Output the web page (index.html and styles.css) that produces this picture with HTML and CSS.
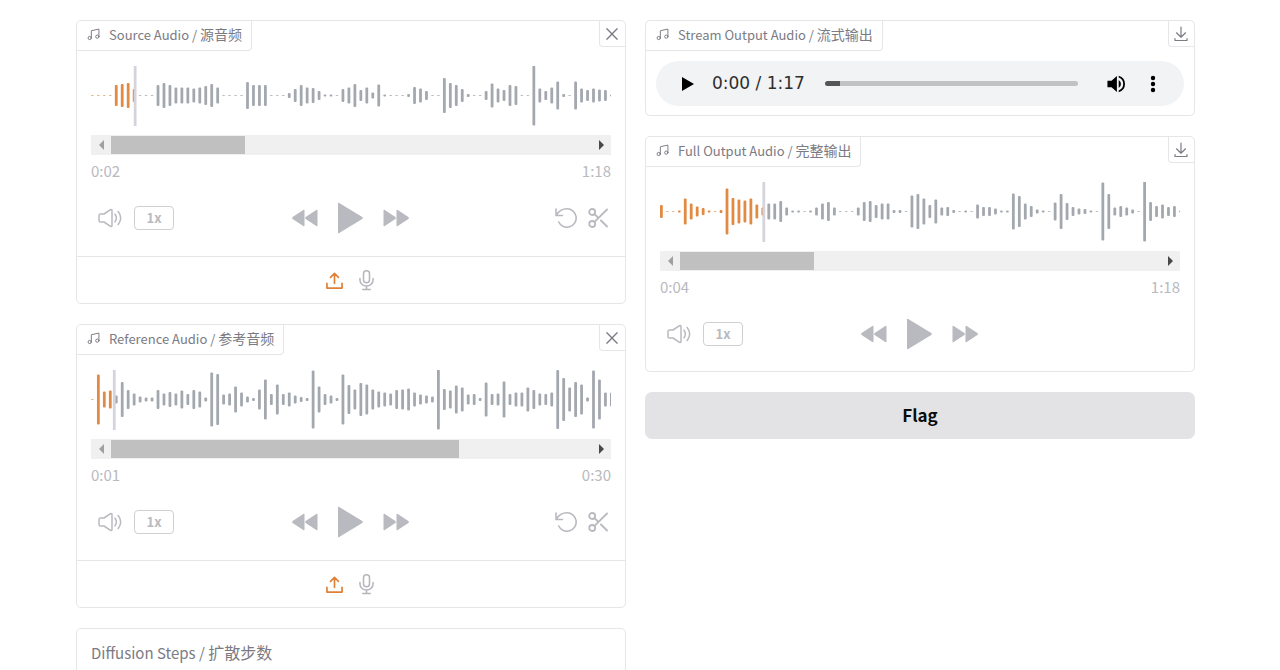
FILE: index.html
```html
<!DOCTYPE html>
<html lang="en">
	<head>
		<meta charset="UTF-8" />
		<meta name="viewport" content="width=device-width, initial-scale=1.0" />
		<title>Voice Conversion</title>
		<link rel="stylesheet" href="styles.css">
	</head>
	<body>
		<!-- Shared icons -->
		<svg class="sprite" aria-hidden="true">
			<symbol id="icon-music" viewBox="0 0 24 24">
				<path d="M8 18.500V5L22 2v14" />
				<circle cx="5" cy="18.500" r="3" />
				<circle cx="19" cy="16" r="3" />
			</symbol>
			<symbol id="icon-close" viewBox="0 0 14 14">
				<path d="M1 1l12 12M13 1L1 13" />
			</symbol>
			<symbol id="icon-download" viewBox="0 0 14 16">
				<path d="M7 1v10M2.500 6.800L7 11.200l4.500-4.400M1 12.500v2h12v-2" />
			</symbol>
			<symbol id="icon-volume" viewBox="0 0 24 20">
				<path d="M1 7.500Q1 6 2.500 6H6l6.500-4.300Q14 1 14 2.500v15q0 1.500-1.500.8L6 14H2.500Q1 14 1 12.500z" />
				<path d="M17 6.200q2.800 3.800 0 7.600M20.200 3.500q5 6.500 0 13" />
			</symbol>
			<symbol id="icon-rewind" viewBox="0 0 26 18">
				<path d="M12.500 1.500v15q0 1.300-1.200.6L.6 10q-1-1 0-2L11.300.9q1.200-.7 1.200.6zM25.500 1.500v15q0 1.300-1.200.6L13.600 10q-1-1 0-2L24.300.9q1.200-.7 1.200.6z" />
			</symbol>
			<symbol id="icon-forward" viewBox="0 0 26 18">
				<path d="M.5 1.500v15q0 1.300 1.200.6L12.400 10q1-1 0-2L1.700.9Q.5.2.5 1.500zM13.500 1.500v15q0 1.300 1.200.6L25.400 10q1-1 0-2L14.700.9q-1.200-.7-1.200.6z" />
			</symbol>
			<symbol id="icon-play" viewBox="0 0 25 32">
				<path d="M0 1.500v29q0 1.300 1.200.5L24.300 16.900q1-.9 0-1.800L1.200 1Q0 .2 0 1.500z" />
			</symbol>
			<symbol id="icon-undo" viewBox="0 0 22 20">
				<path d="M1 1v6.500h6.500M1.500 7Q5 .8 12 .8a9.200 9.200 0 1 1-8.300 13.200" />
			</symbol>
			<symbol id="icon-trim" viewBox="0 0 20 20">
				<circle cx="4.200" cy="4" r="3" />
				<circle cx="4.200" cy="16" r="3" />
				<path d="M19 1.500L6.500 13.900M6.500 6.100L9.500 9M13 12.500l6 6" />
			</symbol>
			<symbol id="icon-upload" viewBox="0 0 18 18">
				<path d="M9 12V1.500M4.800 5.700L9 1.500l4.200 4.200M1 12v5h16v-5" />
			</symbol>
			<symbol id="icon-mic" viewBox="0 0 16 22">
				<rect x="4.800" y="1" width="6.400" height="13" rx="3.200" />
				<path d="M1 9.500v1.500a7 6.500 0 0 0 14 0V9.500M8 17.500V21M4 21h8" />
			</symbol>
			<symbol id="icon-speaker" viewBox="0 0 20 20">
				<path d="M.5 6.500V13.500H5L11 19V1L5 6.500zM13 5.500v9q2.500-1.500 2.500-4.500T13 5.500zM13 .8v2.100q5 2 5 7.100t-5 7.100v2.100q7-2.300 7-9.200T13 .8z" />
			</symbol>
		</svg>

		<main class="app">
			<div class="column">
				<section class="card">
					<header class="card-header">
						<h2 class="label"><svg class="icon label-icon"><use href="#icon-music" /></svg><span>Source Audio / <span lang="zh">源音频</span></span></h2>
						<button class="corner" aria-label="Clear"><svg class="icon icon-close"><use href="#icon-close" /></svg></button>
					</header>
					<div class="player">
						<svg class="wave" data-track="source"></svg>
						<div class="scroller">
							<button class="arrow arrow-left" aria-label="Scroll left"></button>
							<div class="rail"><div class="thumb" style="width: 28%"></div></div>
							<button class="arrow arrow-right" aria-label="Scroll right"></button>
						</div>
						<div class="times"><time>0:02</time><time>1:18</time></div>
						<div class="controls">
							<div class="group sound">
								<button aria-label="Volume"><svg class="icon icon-volume"><use href="#icon-volume" /></svg></button>
								<button class="speed">1x</button>
							</div>
							<div class="group playback">
								<button aria-label="Back"><svg class="solid icon-skip"><use href="#icon-rewind" /></svg></button>
								<button aria-label="Play"><svg class="solid icon-play"><use href="#icon-play" /></svg></button>
								<button aria-label="Forward"><svg class="solid icon-skip"><use href="#icon-forward" /></svg></button>
							</div>
							<div class="group edit">
								<button aria-label="Undo"><svg class="icon icon-undo"><use href="#icon-undo" /></svg></button>
								<button aria-label="Trim"><svg class="icon icon-trim"><use href="#icon-trim" /></svg></button>
							</div>
						</div>
					</div>
					<footer class="sources">
						<button class="active" aria-label="Upload file"><svg class="icon icon-upload"><use href="#icon-upload" /></svg></button>
						<button aria-label="Record audio"><svg class="icon icon-mic"><use href="#icon-mic" /></svg></button>
					</footer>
				</section>

				<section class="card">
					<header class="card-header">
						<h2 class="label"><svg class="icon label-icon"><use href="#icon-music" /></svg><span>Reference Audio / <span lang="zh">参考音频</span></span></h2>
						<button class="corner" aria-label="Clear"><svg class="icon icon-close"><use href="#icon-close" /></svg></button>
					</header>
					<div class="player">
						<svg class="wave" data-track="reference"></svg>
						<div class="scroller">
							<button class="arrow arrow-left" aria-label="Scroll left"></button>
							<div class="rail"><div class="thumb" style="width: 72.5%"></div></div>
							<button class="arrow arrow-right" aria-label="Scroll right"></button>
						</div>
						<div class="times"><time>0:01</time><time>0:30</time></div>
						<div class="controls">
							<div class="group sound">
								<button aria-label="Volume"><svg class="icon icon-volume"><use href="#icon-volume" /></svg></button>
								<button class="speed">1x</button>
							</div>
							<div class="group playback">
								<button aria-label="Back"><svg class="solid icon-skip"><use href="#icon-rewind" /></svg></button>
								<button aria-label="Play"><svg class="solid icon-play"><use href="#icon-play" /></svg></button>
								<button aria-label="Forward"><svg class="solid icon-skip"><use href="#icon-forward" /></svg></button>
							</div>
							<div class="group edit">
								<button aria-label="Undo"><svg class="icon icon-undo"><use href="#icon-undo" /></svg></button>
								<button aria-label="Trim"><svg class="icon icon-trim"><use href="#icon-trim" /></svg></button>
							</div>
						</div>
					</div>
					<footer class="sources">
						<button class="active" aria-label="Upload file"><svg class="icon icon-upload"><use href="#icon-upload" /></svg></button>
						<button aria-label="Record audio"><svg class="icon icon-mic"><use href="#icon-mic" /></svg></button>
					</footer>
				</section>

				<section class="card steps">
					<h2>Diffusion Steps / <span lang="zh">扩散步数</span></h2>
				</section>
			</div>

			<div class="column">
				<section class="card">
					<header class="card-header">
						<h2 class="label"><svg class="icon label-icon"><use href="#icon-music" /></svg><span>Stream Output Audio / <span lang="zh">流式输出</span></span></h2>
						<button class="corner" aria-label="Download"><svg class="icon icon-download"><use href="#icon-download" /></svg></button>
					</header>
					<div class="stream">
						<button aria-label="Play"><svg class="solid stream-play" viewBox="0 0 12 14"><path d="M0 0v14l12-7z" /></svg></button>
						<span class="stream-time">0:00 / 1:17</span>
						<input class="seek" type="range" min="0" max="100" value="0" aria-label="Seek" />
						<button aria-label="Mute"><svg class="solid stream-speaker"><use href="#icon-speaker" /></svg></button>
						<button aria-label="More options"><svg class="solid stream-more" viewBox="0 0 6 18"><circle cx="3" cy="3" r="2.200" /><circle cx="3" cy="9" r="2.200" /><circle cx="3" cy="15" r="2.200" /></svg></button>
					</div>
				</section>

				<section class="card">
					<header class="card-header">
						<h2 class="label"><svg class="icon label-icon"><use href="#icon-music" /></svg><span>Full Output Audio / <span lang="zh">完整输出</span></span></h2>
						<button class="corner" aria-label="Download"><svg class="icon icon-download"><use href="#icon-download" /></svg></button>
					</header>
					<div class="player">
						<svg class="wave" data-track="full"></svg>
						<div class="scroller">
							<button class="arrow arrow-left" aria-label="Scroll left"></button>
							<div class="rail"><div class="thumb" style="width: 28%"></div></div>
							<button class="arrow arrow-right" aria-label="Scroll right"></button>
						</div>
						<div class="times"><time>0:04</time><time>1:18</time></div>
						<div class="controls">
							<div class="group sound">
								<button aria-label="Volume"><svg class="icon icon-volume"><use href="#icon-volume" /></svg></button>
								<button class="speed">1x</button>
							</div>
							<div class="group playback">
								<button aria-label="Back"><svg class="solid icon-skip"><use href="#icon-rewind" /></svg></button>
								<button aria-label="Play"><svg class="solid icon-play"><use href="#icon-play" /></svg></button>
								<button aria-label="Forward"><svg class="solid icon-skip"><use href="#icon-forward" /></svg></button>
							</div>
						</div>
					</div>
				</section>

				<button class="flag">Flag</button>
			</div>
		</main>

		<script src="waves.js"></script>
	</body>
</html>
```
FILE: waves.js
```js
// Bar heights in a 60 unit tall strip, one bar every 6 units
const tracks = {
	source: {
		cursor: 44,
		bars: [
			1, 1, 1, 1, 21, 23, 25, 13, 1, 1, 1, 21, 25, 21, 16, 16, 16, 14, 16, 19, 23, 16,
			1, 1, 1, 1, 27, 21, 21, 21, 1, 1, 1, 5, 13, 21, 16, 15, 9, 2, 2, 1, 13, 16,
			23, 11, 16, 6, 22, 2, 1, 1, 1, 3, 17, 14, 9, 1, 1, 35, 25, 21, 13, 3, 1, 1,
			9, 24, 14, 11, 21, 19, 1, 1, 60, 14, 9, 16, 28, 3, 1, 28, 14, 11, 14, 12, 11, 2,
		],
	},
	reference: {
		cursor: 23,
		bars: [
			1, 50, 16, 18, 8, 35, 19, 12, 6, 4, 4, 19, 12, 15, 12, 18, 11, 19, 16, 4, 54, 51,
			10, 12, 26, 14, 6, 3, 20, 40, 11, 30, 11, 14, 8, 5, 3, 58, 26, 11, 8, 3, 50, 29,
			20, 33, 30, 20, 16, 14, 12, 19, 20, 22, 14, 10, 8, 6, 60, 21, 18, 28, 24, 10, 11, 3,
			34, 11, 12, 36, 11, 14, 14, 24, 19, 12, 11, 14, 59, 43, 24, 35, 30, 4, 58, 40, 14, 14,
		],
	},
	full: {
		cursor: 104,
		bars: [
			13, 1, 1, 2, 26, 16, 10, 7, 2, 1, 3, 46, 27, 24, 22, 26, 14, 8, 16, 16, 21, 8,
			2, 2, 1, 2, 8, 16, 19, 8, 1, 1, 1, 8, 19, 21, 13, 16, 16, 3, 3, 1, 32, 35,
			26, 13, 24, 8, 9, 3, 1, 2, 1, 14, 9, 9, 6, 2, 2, 36, 31, 16, 11, 4, 2, 1,
			18, 35, 17, 9, 6, 5, 2, 1, 58, 35, 8, 11, 8, 4, 1, 60, 19, 11, 14, 9, 11, 2,
		],
	},
};

document.querySelectorAll('.wave').forEach((svg) => {
	const { cursor, bars } = tracks[svg.dataset.track];

	svg.setAttribute('viewBox', '0 0 523 60');
	svg.setAttribute('preserveAspectRatio', 'none');
	svg.innerHTML = bars
		.map((height, i) => {
			const state = i * 6 < cursor ? 'played' : 'pending';
			const size = height < 2 ? 'quiet' : '';
			return `<rect class="${state} ${size}" x="${i * 6}" y="${29.5 - height / 2}" width="2.8" height="${height}" rx="1" />`;
		})
		.join('');
	svg.innerHTML += `<rect class="cursor" x="${cursor - 1}" y="0" width="2.8" height="60" />`;
});
```
FILE: styles.css
```css
* {
	box-sizing: border-box;
}
body {
	margin: 0;
	background: #fff;
	color: #7b7b84;
	font-family: 'Noto Sans CJK SC', 'Noto Sans', sans-serif;
	font-size: 14px;
}
h2 {
	margin: 0;
	font-weight: 400;
}
button {
	display: flex;
	align-items: center;
	justify-content: center;
	margin: 0;
	padding: 0;
	border: 0;
	background: none;
	color: inherit;
	font: inherit;
	cursor: pointer;
}
svg {
	display: block;
}
.sprite {
	display: none;
}
.icon {
	fill: none;
	stroke: currentColor;
	stroke-width: 1.6;
	stroke-linecap: round;
	stroke-linejoin: round;
	overflow: visible;
}
.solid {
	fill: currentColor;
}

/* Page */
.app {
	display: grid;
	grid-template-columns: 1fr 1fr;
	align-items: start;
	gap: 19px;
	padding: 20px 85px 0 76px;
}
.column {
	display: flex;
	flex-direction: column;
	gap: 20px;
}
.card {
	border: 1px solid #e6e6e9;
	border-radius: 5px;
}
.card-header {
	display: flex;
	align-items: flex-start;
	justify-content: space-between;
	height: 30px;
}
.label {
	display: flex;
	align-items: center;
	gap: 9px;
	height: 30px;
	padding: 0 9px 2px 10px;
	border: solid #e6e6e9;
	border-width: 0 1px 1px 0;
	border-bottom-right-radius: 4px;
	font-size: 13px;
	line-height: 20px;
}
.label [lang='zh'] {
	font-size: 14px;
}
.label-icon {
	width: 13px;
	height: 13px;
	stroke-width: 1.8;
}
.corner {
	width: 26px;
	height: 26px;
	padding-right: 2px;
	border: solid #e6e6e9;
	border-width: 0 0 1px 1px;
	border-bottom-left-radius: 4px;
}
.icon-close {
	width: 12px;
	height: 12px;
}
.icon-download {
	width: 14px;
	height: 16px;
	stroke-width: 1.2;
}

/* Waveform player */
.player {
	padding: 15px 14px 9px;
	color: #b9b9c0;
}
.player:last-child {
	padding-bottom: 8px;
}
.wave {
	width: 100%;
	height: 60px;
	overflow: hidden;
}
.played {
	fill: #e08a43;
}
.pending {
	fill: #a3a8af;
}
.played.quiet {
	fill: #dfb78c;
}
.pending.quiet {
	fill: #b9bbbe;
}
.cursor {
	fill: #d5d3dc;
}
.scroller {
	display: flex;
	height: 20px;
	margin-top: 9px;
	background: #f0f0f0;
}
.arrow {
	width: 20px;
	height: 20px;
}
.arrow::before {
	content: '';
	border: solid transparent;
	border-width: 5px 0;
}
.arrow-left::before {
	border-right: 5px solid #a0a0a0;
}
.arrow-right::before {
	border-left: 5px solid #484848;
}
.rail {
	flex: 1;
	padding: 1px 0;
}
.thumb {
	height: 18px;
	background: #c0c0c0;
}
.times {
	display: flex;
	justify-content: space-between;
	padding-bottom: 2px;
	font-size: 15px;
	line-height: 32px;
}
.controls {
	display: grid;
	grid-template-columns: 1fr auto 1fr;
	align-items: center;
	height: 58px;
	padding: 0 3px 0 2px;
}
.group {
	display: flex;
	align-items: center;
	gap: 12px;
}
.sound {
	padding-left: 5px;
}
.playback {
	gap: 20px;
}
.edit {
	gap: 11px;
	justify-content: flex-end;
}
.speed {
	width: 40px;
	height: 24px;
	padding-bottom: 2px;
	border: 1px solid #cfcfd4;
	border-radius: 4px;
	font-size: 13px;
	font-weight: 700;
}
.icon-volume {
	width: 24px;
	height: 20px;
	stroke-width: 1.5;
}
.icon-skip {
	width: 26px;
	height: 18px;
}
.icon-play {
	width: 25px;
	height: 32px;
}
.icon-undo {
	width: 22px;
	height: 20px;
}
.icon-trim {
	width: 20px;
	height: 20px;
	stroke-width: 1.8;
}
.sources {
	display: flex;
	align-items: center;
	justify-content: center;
	gap: 16px;
	height: 47px;
	padding-right: 2px;
	border-top: 1px solid #e6e6e9;
	color: #b5b5bb;
}
.active {
	color: #e08138;
}
.icon-upload {
	width: 17px;
	height: 17px;
	stroke-width: 1.8;
}
.icon-mic {
	width: 15px;
	height: 22px;
}

/* Native style audio bar */
.stream {
	display: flex;
	align-items: center;
	height: 45px;
	margin: 10px 10px 9px;
	padding: 0 28px 0 26px;
	border-radius: 24px;
	background: #f1f3f4;
	color: #000;
}
.stream-play {
	width: 12px;
	height: 14px;
}
.stream-time {
	margin: 0 20px 0 18px;
	padding-bottom: 2px;
	color: #2e2e2e;
	font-family: 'DejaVu Sans', sans-serif;
	font-size: 17px;
	line-height: 24px;
}
.seek {
	flex: 1;
	min-width: 0;
	height: 5px;
	margin: 0 28px 0 0;
	border-radius: 3px;
	appearance: none;
	background: linear-gradient(to right, #555 6%, #c2c2c3 6%);
}
.seek::-webkit-slider-thumb {
	width: 1px;
	height: 1px;
	appearance: none;
	opacity: 0;
}
.stream-speaker {
	width: 20px;
	height: 18px;
	margin-right: 24px;
}
.stream-more {
	width: 6px;
	height: 18px;
}

.flag {
	height: 47px;
	padding-bottom: 2px;
	border-radius: 7px;
	background: #e3e3e5;
	color: #0b0b0c;
	font-size: 17px;
	font-weight: 700;
}
.steps {
	padding: 11px 14px 13px;
}
.steps h2 {
	font-size: 15px;
	line-height: 24px;
}
.steps [lang='zh'] {
	font-size: 16px;
}
```
